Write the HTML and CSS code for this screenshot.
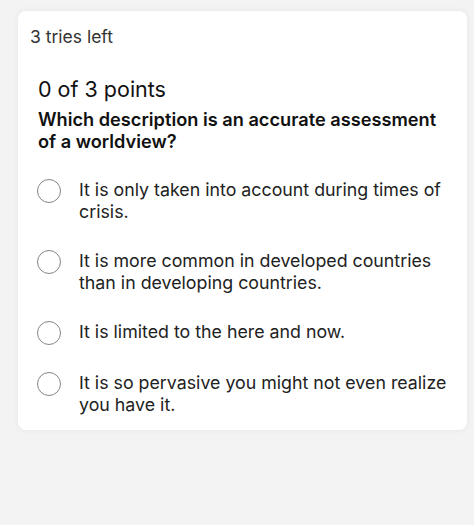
FILE: index.html
```html
<!DOCTYPE html>
<html lang="en">
<head>
    <meta charset="UTF-8">
    <meta name="viewport" content="width=device-width, initial-scale=1.0">
    <title>Question</title>
    <link rel="stylesheet" href="styles.css">
</head>
<body>

<div class="question-card">
    <div class="tries">3 tries left</div>

    <div class="question-body">
        <div class="points">0 of 3 points</div>
        <div class="prompt">Which description is an accurate assessment of a worldview?</div>

        <!-- Answer choices -->
        <div class="choices">
            <label class="choice">
                <span class="radio"></span>
                <span class="choice-text">It is only taken into account during times of crisis.</span>
            </label>
            <label class="choice">
                <span class="radio"></span>
                <span class="choice-text">It is more common in developed countries than in developing countries.</span>
            </label>
            <label class="choice">
                <span class="radio"></span>
                <span class="choice-text">It is limited to the here and now.</span>
            </label>
            <label class="choice">
                <span class="radio"></span>
                <span class="choice-text">It is so pervasive you might not even realize you have it.</span>
            </label>
        </div>
    </div>
</div>

</body>
</html>
```

FILE: styles.css
```css
body {
    font-family: Inter, "Noto Sans", Arial, sans-serif;
    background-color: #f3f3f3;
    margin: 0;
    padding: 11px 7px 0 18px;
    height: 525px;
    box-sizing: border-box;
    color: #1f1f1f;
}
.question-card {
    background-color: #fff;
    border-radius: 8px;
    box-shadow: 0 0 6px rgba(0, 0, 0, 0.06);
    padding: 15px 14px 15px 12px;
    height: 419px;
    box-sizing: border-box;
}
.tries {
    font-size: 17.5px;
    line-height: 22px;
    color: #333;
}
.question-body {
    padding-left: 8px;
    margin-top: 28px;
}
.points {
    font-size: 21.5px;
    line-height: 26px;
    color: #111;
}
.prompt {
    font-size: 18.2px;
    line-height: 22px;
    font-weight: 600;
    color: #111;
    margin-top: 6px;
    max-width: 405px;
}
.choices {
    display: flex;
    flex-direction: column;
    gap: 27px;
    margin-top: 27px;
}
.choice {
    display: flex;
    align-items: flex-start;
    gap: 18px;
    cursor: pointer;
}
.radio {
    flex: none;
    width: 24px;
    height: 24px;
    box-sizing: border-box;
    border: 1.5px solid #858585;
    border-radius: 50%;
    margin-top: 0;
    margin-left: -1px;
}
.choice-text {
    font-size: 17.8px;
    line-height: 22px;
    color: #222;
}
```
